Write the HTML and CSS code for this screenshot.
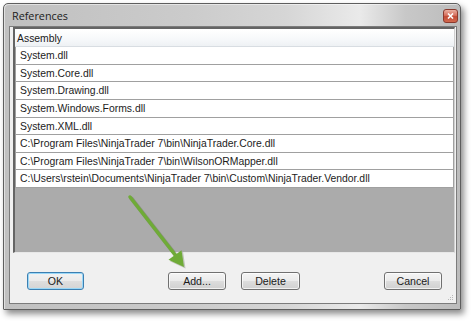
FILE: index.html
```html
<!DOCTYPE html>
<html>
<head>
<meta charset="utf-8">
<title>References</title>
<link rel="stylesheet" href="styles.css">
</head>
<body>
<div class="dialog">
  <div class="titlebar">
    <span class="title">References</span>
    <span class="close">
      <svg width="7" height="6" viewBox="0 0 7 6"><path d="M1 0.5 L6 5.5 M6 0.5 L1 5.5" stroke="#ffffff" stroke-width="1.6"/></svg>
    </span>
  </div>
  <div class="client">
    <div class="list">
      <div class="header">Assembly</div>
      <div class="rows">
        <div class="row">System.dll</div>
        <div class="row">System.Core.dll</div>
        <div class="row">System.Drawing.dll</div>
        <div class="row">System.Windows.Forms.dll</div>
        <div class="row">System.XML.dll</div>
        <div class="row">C:\Program Files\NinjaTrader 7\bin\NinjaTrader.Core.dll</div>
        <div class="row">C:\Program Files\NinjaTrader 7\bin\WilsonORMapper.dll</div>
        <div class="row">C:\Users\rstein\Documents\NinjaTrader 7\bin\Custom\NinjaTrader.Vendor.dll</div>
      </div>
    </div>
    <div class="buttons">
      <button class="btn btn-default btn-ok">OK</button>
      <button class="btn btn-add">Add...</button>
      <button class="btn btn-delete">Delete</button>
      <button class="btn btn-cancel">Cancel</button>
    </div>
    <svg class="grip" width="6" height="6" viewBox="0 0 6 6">
      <rect x="4" y="0" width="1" height="1" fill="#b8b8b8"/>
      <rect x="2" y="2" width="1" height="1" fill="#b8b8b8"/>
      <rect x="4" y="2" width="1" height="1" fill="#b8b8b8"/>
      <rect x="0" y="4" width="1" height="1" fill="#b8b8b8"/>
      <rect x="2" y="4" width="1" height="1" fill="#b8b8b8"/>
      <rect x="4" y="4" width="1" height="1" fill="#b8b8b8"/>
    </svg>
  </div>
</div>
<svg class="arrow" width="474" height="323" viewBox="0 0 474 323">
  <g opacity="0.25" transform="translate(1.5,1.5)">
    <line x1="130" y1="197" x2="176" y2="256" stroke="#2a4010" stroke-width="4" stroke-linecap="round"/>
    <polygon points="168.5,259.8 184,267 181.5,250.2" fill="#2a4010"/>
  </g>
  <line x1="130" y1="197" x2="176" y2="256" stroke="#6fab37" stroke-width="3.5" stroke-linecap="round"/>
  <polygon points="168.5,259.8 184,267 181.5,250.2" fill="#6fab37"/>
</svg>
</body>
</html>
```
FILE: styles.css
```css
html, body {
  margin: 0;
  padding: 0;
  background: #ffffff;
  width: 474px;
  height: 323px;
  overflow: hidden;
}

body {
  position: relative;
  font-family: "Liberation Sans", Arial, sans-serif;
  font-size: 10.4px;
  color: #1c1c1c;
}

.dialog {
  margin: 3px 0 0 3px;
  width: 458px;
  height: 307px;
  box-sizing: border-box;
  border: 1px solid #5e5e5e;
  border-radius: 5px 5px 1px 1px;
  background: linear-gradient(to right, #c0c0c0 0%, #cbcbcb 40%, #d6d6d6 62%, #eaeaea 78%, #c8c8c8 88%, #bcbcbc 100%);
  padding: 0 3px 5px 5px;
  display: flex;
  flex-direction: column;
  box-shadow: 3px 4px 6px rgba(0, 0, 0, 0.45), inset 1px 1px 0 rgba(255, 255, 255, 0.5);
}

.titlebar {
  height: 22px;
  display: flex;
  align-items: flex-start;
  justify-content: space-between;
  padding-left: 3px;
}

.title {
  font-family: "Open Sans", "Noto Sans", sans-serif;
  font-size: 10.8px;
  color: #202020;
  margin-top: 4px;
}

.close {
  width: 15px;
  height: 14px;
  box-sizing: border-box;
  margin-top: 5px;
  margin-right: -1px;
  border: 1px solid #8a3a2e;
  border-radius: 3px;
  background: linear-gradient(to bottom, #eab0a2 0%, #d66f5c 45%, #c24a34 55%, #d36a50 100%);
  display: flex;
  align-items: center;
  justify-content: center;
}

.close svg {
  display: block;
}

.client {
  flex: 1;
  position: relative;
  background: #f0f0f0;
  border: 1px solid #7c7c7c;
  display: flex;
  flex-direction: column;
}

.list {
  margin: 0 1px 0 3px;
  height: 226px;
  box-sizing: border-box;
  background: #ababab;
  border-top: 2px solid #646464;
  border-left: 2px solid #646464;
  border-right: 1px solid #d0d0d0;
  border-bottom: 1px solid #e8e8e8;
  padding-top: 1px;
  box-shadow: inset 0 1px 0 #ffffff;
}

.header {
  height: 17px;
  box-sizing: border-box;
  background: linear-gradient(to bottom, #ffffff 0%, #f6f8fa 60%, #eef1f4 100%);
  border-bottom: 1px solid #d8dde2;
  padding-left: 2px;
  line-height: 17px;
  color: #1a1a1a;
}

.row {
  height: 17.625px;
  box-sizing: border-box;
  background: #ffffff;
  border-left: 1px solid #a0a0a0;
  border-right: 1px solid #a0a0a0;
  border-bottom: 1px solid #a0a0a0;
  padding-left: 4px;
  line-height: 17px;
  white-space: nowrap;
  overflow: hidden;
}

.buttons {
  display: flex;
  padding-top: 19px;
}

.btn {
  height: 18px;
  width: 58px;
  box-sizing: border-box;
  padding: 0;
  font-family: "Liberation Sans", Arial, sans-serif;
  font-size: 10.6px;
  color: #1a1a1a;
  border: 1px solid #707070;
  border-radius: 3px;
  background: linear-gradient(to bottom, #f4f4f4 0%, #ebebeb 48%, #dddddd 52%, #d0d0d0 100%);
  box-shadow: inset 0 0 0 1px rgba(255, 255, 255, 0.7);
  line-height: 16px;
}

.btn-default {
  border-color: #3c7fb1;
  background: linear-gradient(to bottom, #f2f2f2 0%, #ebebeb 48%, #dedede 52%, #d4d4d4 100%);
  box-shadow: inset 0 0 0 1px #9ad8f8;
}

.btn-ok {
  margin-left: 17px;
  width: 57px;
}

.btn-add {
  margin-left: 84px;
}

.btn-delete {
  margin-left: 15px;
  width: 59px;
}

.btn-cancel {
  margin-left: 84px;
}

.grip {
  position: absolute;
  right: 2px;
  bottom: 2px;
}

.arrow {
  position: absolute;
  left: 0;
  top: 0;
  pointer-events: none;
}
```
